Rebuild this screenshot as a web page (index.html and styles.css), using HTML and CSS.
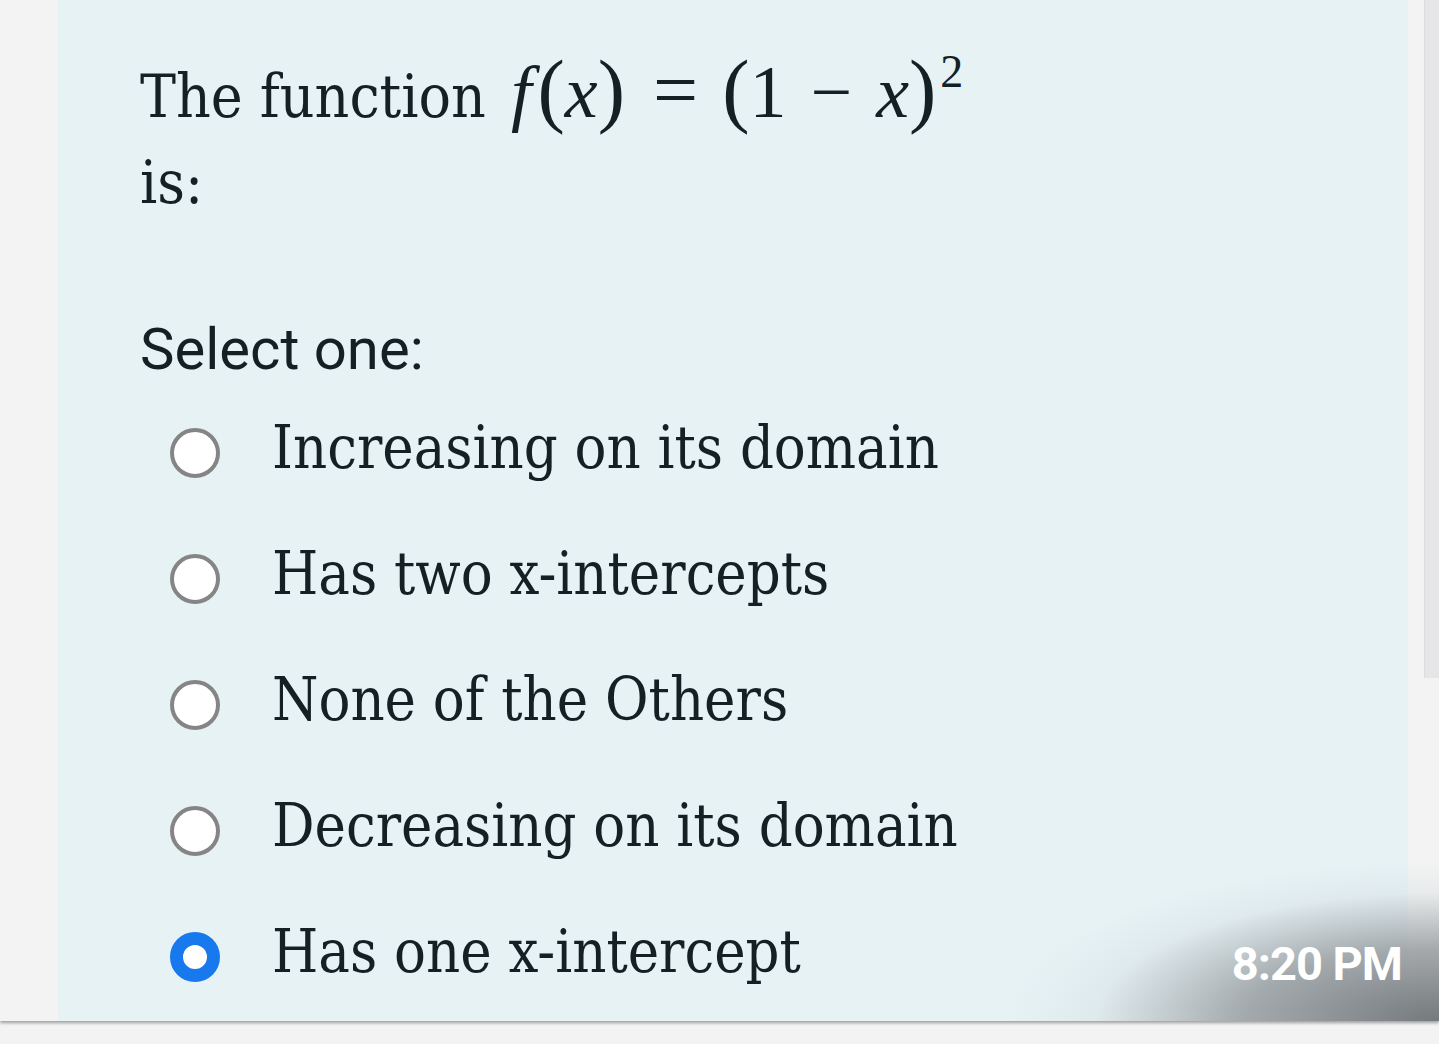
FILE: index.html
```html
<!DOCTYPE html>
<html lang="en">
<head>
<meta charset="utf-8">
<title>Quiz question</title>
<link rel="stylesheet" href="styles.css">
</head>
<body>
<div class="page">
  <div class="main">
    <div class="gutter-left"></div>
    <div class="panel">
      <div class="question">
        <span class="qtext">The function</span>
        <span class="math"><span class="mi f">f</span><span class="mo">(</span><span class="mi">x</span><span class="mo">)</span><span class="rel">=</span><span class="mo">(</span><span class="mn">1</span><span class="bin">−</span><span class="mi">x</span><span class="mo">)</span><sup class="sup">2</sup></span>
        <br><span class="qtext">is:</span>
      </div>
      <div class="prompt">Select one:</div>
      <ul class="options">
        <li class="option"><span class="radio"></span><span class="label">Increasing on its domain</span></li>
        <li class="option"><span class="radio"></span><span class="label">Has two x-intercepts</span></li>
        <li class="option"><span class="radio"></span><span class="label">None of the Others</span></li>
        <li class="option"><span class="radio"></span><span class="label">Decreasing on its domain</span></li>
        <li class="option"><span class="radio checked"></span><span class="label">Has one x-intercept</span></li>
      </ul>
    </div>
    <div class="gutter-right"><div class="scrollbar"></div></div>
  </div>
  <div class="bottom"></div>
  <div class="toast"><span class="time">8:20 PM</span></div>
</div>
</body>
</html>
```

FILE: styles.css
```css
html, body {
  margin: 0;
  padding: 0;
}
body {
  width: 1439px;
  height: 1044px;
  overflow: hidden;
  background: #f2f2f2;
}
.page {
  position: relative;
  width: 1439px;
  height: 1044px;
  display: flex;
  flex-direction: column;
}
.main {
  display: flex;
  height: 1021px;
  position: relative;
  z-index: 1;
  box-shadow: 0 2px 3px rgba(0,0,0,0.35);
}
.gutter-left {
  width: 58px;
  background: #f3f3f3;
}
.panel {
  flex: 1;
  background: #e7f2f5;
  padding: 50px 0 0 82px;
  color: #132125;
}
.gutter-right {
  width: 31px;
  background: #f3f3f3;
  display: flex;
  justify-content: flex-end;
}
.scrollbar {
  width: 14px;
  height: 678px;
  background: #e6e6e8;
  border-left: 1px solid #dcdcdf;
}
.bottom {
  flex: 1;
  background: #f3f3f3;
}
.question {
  font-family: "DejaVu Serif", serif;
  font-stretch: condensed;
  font-size: 60px;
  line-height: 80px;
}
.math {
  font-family: "Liberation Serif", serif;
  font-size: 74px;
  margin-left: 8px;
}
.mi { font-style: italic; }
.f { margin-right: 6px; }
.mo { font-size: 82px; }
.rel { margin: 0 24px 0 28px; font-size: 80px; }
.bin { margin: 0 24px; }
.sup { font-size: 46px; vertical-align: 0; position: relative; top: -30px; margin-left: 4px; }
.prompt {
  font-family: Roboto, "Liberation Sans", sans-serif;
  font-size: 58px;
  margin-top: 92px;
  line-height: 70px;
}
.options {
  list-style: none;
  margin: 0;
  padding: 0 0 0 30px;
}
.option {
  display: flex;
  align-items: center;
  height: 126px;
  gap: 52px;
}
.radio {
  width: 42px;
  height: 42px;
  border: 4px solid #858585;
  border-radius: 50%;
  background: #ffffff;
  flex: none;
  position: relative;
  top: 6px;
}
.radio.checked {
  width: 24px;
  height: 24px;
  border: 13px solid #1878ee;
}
.label {
  font-family: "DejaVu Serif", serif;
  font-stretch: condensed;
  font-size: 59px;
}
.toast {
  position: absolute;
  right: 0;
  bottom: 23px;
  width: 440px;
  height: 185px;
  z-index: 2;
  background: radial-gradient(ellipse 430px 160px at 100% 100%, rgba(110,115,118,0.95) 0%, rgba(140,145,148,0.75) 45%, rgba(200,210,214,0.25) 80%, rgba(231,242,245,0) 100%);
  display: flex;
  align-items: flex-end;
  justify-content: flex-end;
}
.time {
  font-family: Roboto, "Liberation Sans", sans-serif;
  font-weight: 700;
  font-size: 47px;
  color: #ffffff;
  margin: 0 37px 30px 0;
  letter-spacing: -1px;
}
```
